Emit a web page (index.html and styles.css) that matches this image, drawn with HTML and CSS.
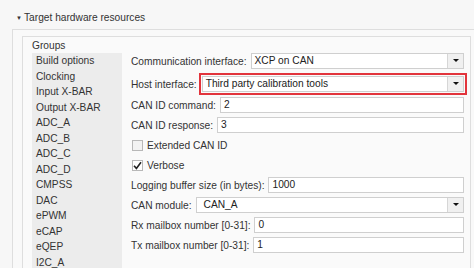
FILE: index.html
```html
<!DOCTYPE html>
<html lang="en">
<head>
    <meta charset="UTF-8">
    <title>Target hardware resources</title>
    <link rel="stylesheet" href="styles.css">
</head>
<body>
    <div class="section">
        <div class="section-title"><span class="caret">&#9660;</span>Target hardware resources</div>

        <div class="panel">
            <div class="groupbox">
                <div class="groups-label">Groups</div>

                <div class="content">
                    <ul class="group-list">
                        <li>Build options</li>
                        <li>Clocking</li>
                        <li>Input X-BAR</li>
                        <li>Output X-BAR</li>
                        <li>ADC_A</li>
                        <li>ADC_B</li>
                        <li>ADC_C</li>
                        <li>ADC_D</li>
                        <li>CMPSS</li>
                        <li>DAC</li>
                        <li>ePWM</li>
                        <li>eCAP</li>
                        <li>eQEP</li>
                        <li>I2C_A</li>
                    </ul>

                    <div class="form">
                        <div class="row">
                            <span class="label">Communication interface:</span>
                            <div class="dropdown">
                                <span class="value">XCP on CAN</span>
                                <span class="arrow"></span>
                            </div>
                        </div>

                        <div class="row row-highlight">
                            <span class="label">Host interface:</span>
                            <div class="highlight">
                                <div class="dropdown">
                                    <span class="value">Third party calibration tools</span>
                                    <span class="arrow"></span>
                                </div>
                            </div>
                        </div>

                        <div class="row">
                            <span class="label">CAN ID command:</span>
                            <div class="field">2</div>
                        </div>

                        <div class="row">
                            <span class="label">CAN ID response:</span>
                            <div class="field">3</div>
                        </div>

                        <div class="row">
                            <span class="checkbox"></span>
                            <span class="check-label">Extended CAN ID</span>
                        </div>

                        <div class="row">
                            <span class="checkbox checked">
                                <svg width="9" height="9" viewBox="0 0 9 9"><path d="M1 4.8 L3.4 7.4 L8 1.2" fill="none" stroke="#222" stroke-width="1.6"/></svg>
                            </span>
                            <span class="check-label">Verbose</span>
                        </div>

                        <div class="row">
                            <span class="label">Logging buffer size (in bytes):</span>
                            <div class="field">1000</div>
                        </div>

                        <div class="row">
                            <span class="label">CAN module:</span>
                            <div class="dropdown">
                                <span class="value indent">CAN_A</span>
                                <span class="arrow"></span>
                            </div>
                        </div>

                        <div class="row">
                            <span class="label">Rx mailbox number [0-31]:</span>
                            <div class="field">0</div>
                        </div>

                        <div class="row">
                            <span class="label">Tx mailbox number [0-31]:</span>
                            <div class="field">1</div>
                        </div>
                    </div>
                </div>
            </div>
        </div>
    </div>
</body>
</html>
```

FILE: styles.css
```css
body {
    margin: 0;
    width: 474px;
    height: 268px;
    overflow: hidden;
    background-color: #f7f7f7;
    font-family: "Liberation Sans", Arial, sans-serif;
    font-size: 10.2px;
    color: #333;
}

.section-title {
    padding: 12px 0 0 16px;
    line-height: 12px;
    height: 12px;
}

.caret {
    display: inline-block;
    font-size: 6px;
    width: 8px;
    vertical-align: top;
    line-height: 12px;
}

.panel {
    box-sizing: border-box;
    height: 239px;
    margin: 5px 0 0 12px;
    padding: 6px 0 0 9px;
    border: 1px solid #dedede;
    border-right: none;
    border-bottom: none;
    background-color: #f9f9f9;
}

.groupbox {
    box-sizing: border-box;
    width: 449px;
    height: 232px;
    padding: 3px 6px 0 9px;
    border: 1px solid #dedede;
    border-bottom: none;
    background-color: #fafafa;
}

.groups-label {
    line-height: 12px;
    margin-bottom: 1px;
}

.content {
    display: flex;
    align-items: flex-start;
}

.group-list {
    list-style: none;
    margin: 0;
    padding: 0;
    width: 90px;
    height: 215px;
    overflow: hidden;
    flex: none;
    background-color: #ececec;
}

.group-list li {
    line-height: 15.5px;
    padding-left: 4px;
}

.form {
    flex: 1;
    margin-left: 9px;
    display: flex;
    flex-direction: column;
    gap: 4px;
}

.row {
    display: flex;
    align-items: center;
    height: 16px;
}

.row-highlight {
    height: 22px;
    margin-bottom: -2px;
}

.label {
    white-space: nowrap;
    margin-right: 4px;
}

.field,
.dropdown {
    flex: 1;
    height: 16px;
    box-sizing: border-box;
    border: 1px solid #cfcfcf;
    background-color: #fff;
    line-height: 14px;
    padding-left: 3px;
    color: #222;
}

.dropdown {
    display: flex;
    padding-right: 0;
}

.dropdown .value {
    flex: 1;
}

.value.indent {
    padding-left: 4px;
}

.arrow {
    width: 15px;
    flex: none;
    border-left: 1px solid #d6d6d6;
    background-color: #f0f0f0;
    position: relative;
}

.arrow::after {
    content: "";
    position: absolute;
    left: 5px;
    top: 5px;
    border-left: 3px solid transparent;
    border-right: 3px solid transparent;
    border-top: 3px solid #111;
}

.highlight {
    flex: 1;
    display: flex;
    margin: 0 -3px 0 -2px;
    padding: 1px;
    border: 2px solid #e2343c;
}

.checkbox {
    width: 11px;
    height: 11px;
    box-sizing: border-box;
    border: 1px solid #b8b8b8;
    background-color: #f2f2f2;
    margin: 0 4px 0 1px;
    display: flex;
    align-items: center;
    justify-content: center;
}

.checkbox.checked {
    background-color: #fff;
}
```
